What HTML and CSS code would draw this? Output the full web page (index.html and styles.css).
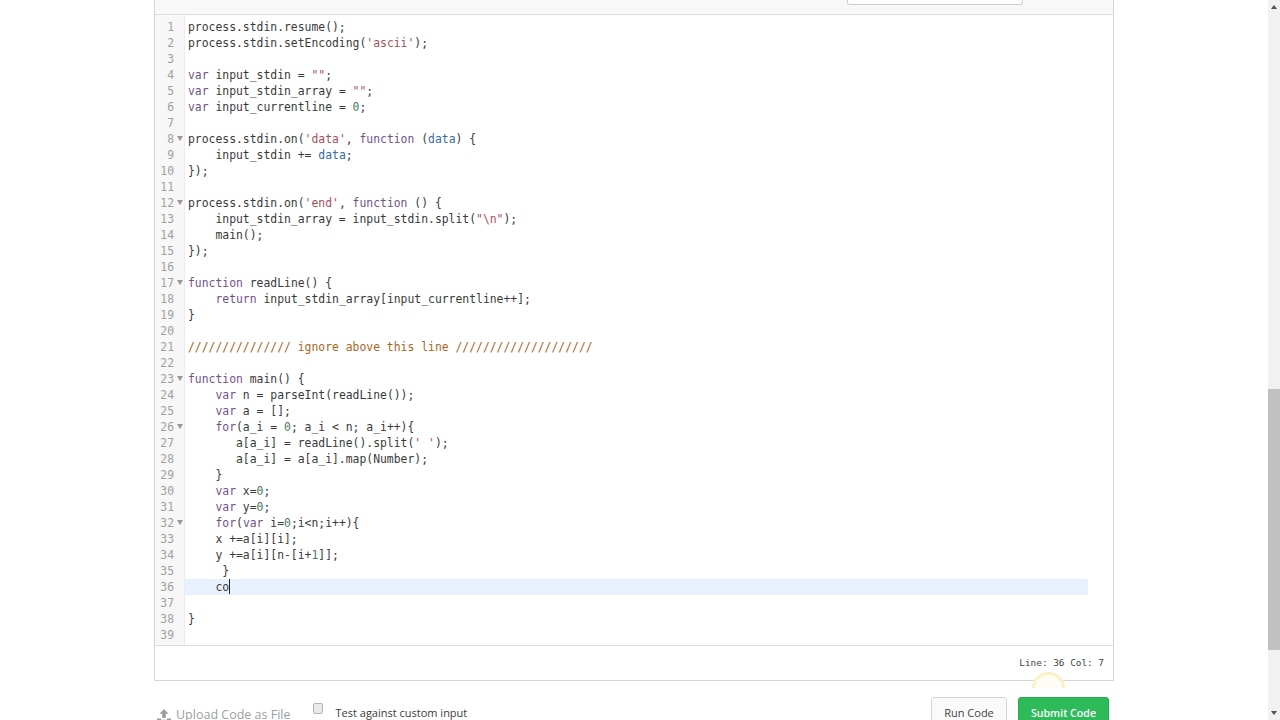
FILE: index.html
```html
<!DOCTYPE html>
<html lang="en">
<head>
<meta charset="utf-8">
<title>Code editor</title>
<link rel="stylesheet" href="styles.css">
</head>
<body>
<div class="page">
  <main class="content">
    <section class="card">
      <div class="toolbar"><div class="select"></div></div>
      <div class="editor">
        <div class="gutter">
          <div>1</div><div>2</div><div>3</div><div>4</div><div>5</div><div>6</div><div>7</div>
          <div class="fold">8</div><div>9</div><div>10</div><div>11</div>
          <div class="fold">12</div><div>13</div><div>14</div><div>15</div><div>16</div>
          <div class="fold">17</div><div>18</div><div>19</div><div>20</div><div>21</div><div>22</div>
          <div class="fold">23</div><div>24</div><div>25</div>
          <div class="fold">26</div><div>27</div><div>28</div><div>29</div><div>30</div><div>31</div>
          <div class="fold">32</div><div>33</div><div>34</div><div>35</div><div>36</div><div>37</div><div>38</div><div>39</div>
        </div>
        <div class="code">
          <div>process.stdin.resume();</div>
          <div>process.stdin.setEncoding(<span class="s">'ascii'</span>);</div>
          <div></div>
          <div><span class="k">var</span> input_stdin = <span class="s">""</span>;</div>
          <div><span class="k">var</span> input_stdin_array = <span class="s">""</span>;</div>
          <div><span class="k">var</span> input_currentline = <span class="n">0</span>;</div>
          <div></div>
          <div>process.stdin.on(<span class="s">'data'</span>, <span class="k">function</span> (<span class="v">data</span>) {</div>
          <div>    input_stdin += <span class="v">data</span>;</div>
          <div>});</div>
          <div></div>
          <div>process.stdin.on(<span class="s">'end'</span>, <span class="k">function</span> () {</div>
          <div>    input_stdin_array = input_stdin.split(<span class="s">"\n"</span>);</div>
          <div>    main();</div>
          <div>});</div>
          <div></div>
          <div><span class="k">function</span> readLine() {</div>
          <div>    <span class="k">return</span> input_stdin_array[input_currentline++];</div>
          <div>}</div>
          <div></div>
          <div><span class="c">/////////////// ignore above this line ////////////////////</span></div>
          <div></div>
          <div><span class="k">function</span> main() {</div>
          <div>    <span class="k">var</span> n = parseInt(readLine());</div>
          <div>    <span class="k">var</span> a = [];</div>
          <div>    <span class="k">for</span>(a_i = <span class="n">0</span>; a_i &lt; n; a_i++){</div>
          <div>       a[a_i] = readLine().split(<span class="s">' '</span>);</div>
          <div>       a[a_i] = a[a_i].map(Number);</div>
          <div>    }</div>
          <div>    <span class="k">var</span> x=<span class="n">0</span>;</div>
          <div>    <span class="k">var</span> y=<span class="n">0</span>;</div>
          <div>    <span class="k">for</span>(<span class="k">var</span> i=<span class="n">0</span>;i&lt;n;i++){</div>
          <div>    x +=a[i][i];</div>
          <div>    y +=a[i][n-[i+<span class="n">1</span>]];</div>
          <div>     }</div>
          <div class="active">    co<span class="caret"></span></div>
          <div></div>
          <div>}</div>
          <div></div>
        </div>
      </div>
      <div class="status">Line: 36 Col: 7</div>
      <div class="click-ring"></div>
    </section>
    <div class="actions">
      <a class="upload">
        <svg class="upload-icon" viewBox="0 0 14 14" width="14" height="14" aria-hidden="true"><path d="M7 0 11.5 4.8H8.8V9H5.2V4.8H2.5Z"/><path d="M0 9.5H4V10.8H10V9.5H14V14H0Z"/></svg>
        Upload Code as File
      </a>
      <span class="check"></span>
      <span class="check-label">Test against custom input</span>
      <span class="spacer"></span>
      <button class="btn run">Run Code</button>
      <button class="btn submit">Submit Code</button>
    </div>
  </main>
  <aside class="scrollbar">
    <span class="arrow up"></span>
    <div class="track"><div class="thumb"></div></div>
    <span class="arrow down"></span>
  </aside>
</div>
</body>
</html>
```
FILE: styles.css
```css
* { box-sizing: border-box; }
html, body { margin: 0; height: 720px; overflow: hidden; background: #fff; }
body { font-family: "Open Sans", "Liberation Sans", sans-serif; color: #333; }

.page { display: flex; height: 720px; }
.content { flex: 1; padding-left: 154px; overflow: hidden; }

.card {
  position: relative;
  width: 960px;
  height: 681px;
  border: 1px solid #d6d6d6;
  border-top: 0;
  display: flex;
  flex-direction: column;
}
.toolbar {
  height: 15px;
  flex: none;
  background: #f8f8f8;
  border-bottom: 1px solid #dcdcdc;
  padding-left: 692px;
}
.select {
  width: 176px;
  height: 5px;
  background: #fff;
  border: 1px solid #cfcfcf;
  border-top: 0;
  border-radius: 0 0 3px 3px;
}

.editor {
  flex: none;
  height: 631px;
  display: flex;
  font-family: "DejaVu Sans Mono", monospace;
  font-size: 11.4px;
  line-height: 16px;
  border-bottom: 1px solid #dcdcdc;
}
.gutter {
  width: 30px;
  flex: none;
  padding: 4px 10px 0 0;
  background: #f7f7f7;
  border-right: 1px solid #ececec;
  color: #a0a0a0;
  text-align: right;
}
.gutter div { height: 16px; position: relative; }
.fold::after {
  content: "";
  position: absolute;
  left: 22px;
  top: 5px;
  border-left: 3px solid transparent;
  border-right: 3px solid transparent;
  border-top: 5px solid #999;
}
.code { flex: 1; padding: 4px 25px 0 0; color: #3a3a3a; }
.code div { height: 16px; padding-left: 3px; white-space: pre; }
.code .active { background: #e8f2ff; }
.k { color: #74508a; }
.s { color: #a8505a; }
.n { color: #4a7a5a; }
.v { color: #3a6aa8; }
.c { color: #a9661f; }
.caret { display: inline-block; width: 0; height: 15px; border-left: 1px solid #222; vertical-align: top; }

.status {
  flex: 1;
  padding: 9px 9px 0 0;
  text-align: right;
  font-family: "DejaVu Sans Mono", monospace;
  font-size: 9.4px;
  line-height: 16px;
  color: #444;
}
.click-ring {
  position: absolute;
  left: 877px;
  top: 672px;
  width: 33px;
  height: 16px;
  border: 3px solid #fbf1c4;
  border-bottom: 0;
  border-radius: 17px 17px 0 0;
  background: #fffdf4;
}

.actions {
  display: flex;
  align-items: flex-start;
  width: 960px;
  height: 39px;
  padding: 16px 5px 0 3px;
  overflow: hidden;
}
.upload {
  display: flex;
  align-items: center;
  gap: 5px;
  margin-top: 9px;
  font-size: 12.5px;
  line-height: 18px;
  color: #9a9fa3;
}
.upload-icon { fill: #9a9fa3; flex: none; margin-top: 2px; }
.check {
  width: 10px;
  height: 11px;
  margin: 6px 0 0 22px;
  border: 1px solid #b5b5b5;
  border-radius: 2px;
  background: #e9e9e9;
}
.check-label {
  margin: 8px 0 0 13px;
  font-size: 11px;
  line-height: 16px;
  color: #3a3a3a;
}
.spacer { flex: 1; }
.btn {
  height: 32px;
  padding: 0;
  flex: none;
  border-radius: 3px;
  font: 600 10.6px/20px "Open Sans", "Liberation Sans", sans-serif;
  text-align: center;
}
.run { width: 76px; background: #fafafa; border: 1px solid #d4d4d4; color: #444; font-weight: 400; font-size: 11px; margin-right: 11px; }
.submit { width: 91px; background: #2dbb5a; border: 1px solid #27ab50; color: #fff; }

.scrollbar {
  width: 12px;
  flex: none;
  background: #f1f1f1;
  display: flex;
  flex-direction: column;
  align-items: center;
}
.arrow { flex: none; width: 0; height: 0; border-left: 3.5px solid transparent; border-right: 3.5px solid transparent; }
.arrow.up { margin: 5px 0 6px; border-bottom: 4px solid #505050; }
.arrow.down { margin: 6px 0 5px; border-top: 4px solid #505050; }
.track { flex: 1; width: 100%; padding-top: 374px; }
.thumb { height: 261px; background: #c1c1c1; }
```
